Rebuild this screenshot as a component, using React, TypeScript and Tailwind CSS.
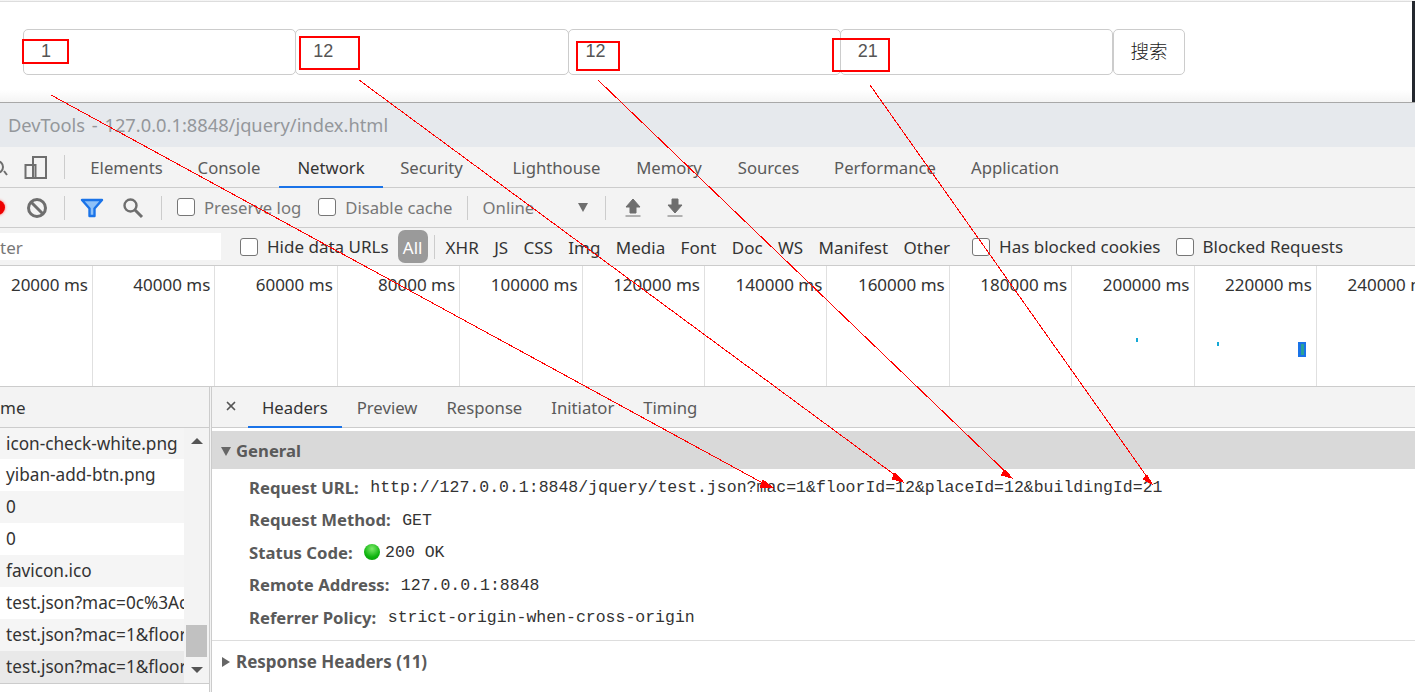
import React from 'react';
import { X } from 'lucide-react';

const ui = "font-['Noto_Sans','Open_Sans',sans-serif]";
const mono = "font-['Liberation_Mono',monospace]";

const panels = [
  { name: 'Elements', width: 'w-[105px]' },
  { name: 'Console', width: 'w-[100px]' },
  { name: 'Network', width: 'w-[104px]' },
  { name: 'Security', width: 'w-[97px]' },
  { name: 'Lighthouse', width: 'w-[153px]' },
  { name: 'Memory', width: 'w-[72px]' },
  { name: 'Sources', width: 'w-[127px]' },
  { name: 'Performance', width: 'w-[106px]' },
  { name: 'Application', width: 'w-[154px]' },
];
const types = ['XHR', 'JS', 'CSS', 'Img', 'Media', 'Font', 'Doc', 'WS', 'Manifest', 'Other'];
const ticks = [20000, 40000, 60000, 80000, 100000, 120000, 140000, 160000, 180000, 200000, 220000, 240000];
const files = [
  'icon-check-white.png',
  'yiban-add-btn.png',
  '0',
  '0',
  'favicon.ico',
  'test.json?mac=0c%3Ac2%3A11',
  'test.json?mac=1&floorId=12',
  'test.json?mac=1&floorId=12',
];

function Box({ label, className = '' }: { label: string; className?: string }) {
  return (
    <label className={`flex items-center gap-[9px] whitespace-nowrap ${className}`}>
      <span className="w-[18px] h-[18px] rounded-[3px] border border-[#767676] bg-white shrink-0" />
      {label}
    </label>
  );
}

function Field({ value }: { value: string }) {
  return (
    <div className="w-[273.25px] h-[46px] shrink-0 -mr-px border border-[#ccc] rounded-[5px] bg-white flex items-center pl-[17px] pb-[2px] text-[18px] text-[#555] font-['Liberation_Sans',sans-serif]">
      {value}
    </div>
  );
}

function Row({ name, value, dot }: { name: string; value: string; dot?: boolean }) {
  return (
    <div className="h-[32.5px] flex items-center whitespace-nowrap">
      <span className="font-bold text-[#5a5a5a] text-[16.7px] mr-[11.5px]">{name}</span>
      {dot && <span className="w-[16px] h-[16px] rounded-full mr-[5px] bg-[radial-gradient(circle_at_50%_30%,#7dea6a,#0fb40f_60%,#079507)]" />}
      <span className={`${mono} text-[16.5px] text-[#333] pt-[3px]`}>{value}</span>
    </div>
  );
}

export default function App() {
  return (
    <div className={`relative w-[1415px] h-[692px] overflow-hidden bg-white ${ui}`}>
      <div className="h-[102px] border-t border-t-transparent relative bg-[linear-gradient(to_bottom,#fff_88%,#f4f4f4)]">
        <div className="h-px bg-[#ddd]" />
        <div className="flex items-start pl-[23px] pt-[27px]">
          <Field value="1" />
          <Field value="12" />
          <Field value="12" />
          <Field value="21" />
          <div className="w-[72px] h-[46px] ml-px border border-[#ccc] rounded-[5px] flex items-center justify-center pb-[2px] text-[18.5px] text-[#222] font-['Noto_Sans_CJK_SC',sans-serif] font-light">
            搜索
          </div>
        </div>
        <div className="absolute right-0 top-0 bottom-0 w-[3px] bg-[#23272e]" />
      </div>

      <div className="h-[45px] border-t border-[#a8a8a8] bg-[#e6e9ed] flex items-center pl-[8px] text-[18.3px] [word-spacing:2px] text-[#94979b]">
        DevTools - 127.0.0.1:8848/jquery/index.html
      </div>

      <div className="h-[41px] bg-[#f3f3f3] border-b border-[#ccc] flex items-stretch text-[16.7px] text-[#5a5a5a]">
        <div className="w-[64px] shrink-0 flex items-center relative">
          <svg width="10" height="24" viewBox="0 0 10 24" className="shrink-0">
            <path d="M-3 6a6 6 0 1 1 0 12a6 6 0 1 1 0-12zM4 16l3 4" fill="none" stroke="#6e6e6e" strokeWidth="2" />
          </svg>
          <svg width="24" height="24" viewBox="0 0 24 24" className="ml-[14px] shrink-0">
            <path d="M9 2h13v21H9zM1.500 10h10v13h-10z" fill="#f3f3f3" stroke="#6e6e6e" strokeWidth="2" />
          </svg>
        </div>
        <div className="w-px h-[24px] self-center bg-[#ccc]" />
        <div className="flex pl-[9px] whitespace-nowrap">
          {panels.map((p) => (
            <div
              key={p.name}
              className={`${p.width} pt-[2px] flex items-center justify-center border-b-2 -mb-px ${
                p.name === 'Network' ? 'border-[#1a73e8] text-[#333]' : 'border-transparent'
              }`}
            >
              {p.name}
            </div>
          ))}
        </div>
      </div>

      <div className="h-[40px] bg-[#f3f3f3] border-b border-[#ccc] flex items-center text-[16.7px] text-[#777] whitespace-nowrap">
        <div className="w-[64px] flex items-center shrink-0 relative h-full">
          <span className="absolute -left-[10px] top-[12px] w-[15px] h-[15px] rounded-full bg-[#e00] shadow-[0_0_3px_#f66]" />
          <svg width="22" height="22" viewBox="0 0 22 22" className="absolute left-[26px] top-[9px]">
            <circle cx="11" cy="11" r="8.5" fill="none" stroke="#6e6e6e" strokeWidth="3" />
            <path d="M5 5l12 12" stroke="#6e6e6e" strokeWidth="3" />
          </svg>
        </div>
        <div className="w-px h-[24px] bg-[#ccc]" />
        <svg width="24" height="22" viewBox="0 0 24 22" className="ml-[15px]">
          <path d="M2 3h20l-7.500 8.500V19l-5 0v-7.500z" fill="#8ec1f8" stroke="#1a73e8" strokeWidth="2.4" strokeLinejoin="round" />
        </svg>
        <svg width="24" height="24" viewBox="0 0 24 24" className="ml-[17px]">
          <circle cx="9.500" cy="9.500" r="6" fill="none" stroke="#6e6e6e" strokeWidth="2.4" />
          <path d="M14 14l7 7" stroke="#6e6e6e" strokeWidth="3" />
        </svg>
        <div className="w-px h-[24px] bg-[#ccc] ml-[16px]" />
        <Box label="Preserve log" className="ml-[15px]" />
        <Box label="Disable cache" className="ml-[17px]" />
        <div className="w-px h-[24px] bg-[#ccc] ml-[14px]" />
        <span className="ml-[15px] w-[95px]">Online</span>
        <span className="w-0 h-0 border-x-[5px] border-x-transparent border-t-[9px] border-t-[#6e6e6e]" />
        <div className="w-px h-[24px] bg-[#ccc] ml-[17px]" />
        <svg width="18" height="20" viewBox="0 0 18 20" className="ml-[18px]">
          <path d="M9 1l7 8h-4v6H6V9H2zM1.500 18h15" fill="#6e6e6e" stroke="#6e6e6e" strokeWidth="1" />
        </svg>
        <svg width="18" height="20" viewBox="0 0 18 20" className="ml-[24px]">
          <path d="M6 1h6v6h4l-7 8-7-8h4zM1.500 18h15" fill="#6e6e6e" stroke="#6e6e6e" strokeWidth="1" />
        </svg>
      </div>

      <div className="h-[38px] bg-[#f3f3f3] border-b border-[#ccc] flex items-center text-[17px] text-[#333] whitespace-nowrap">
        <div className="w-[221px] h-[27px] bg-white text-[#777] flex items-center pt-[2px] overflow-hidden shrink-0">ter</div>
        <Box label="Hide data URLs" className="ml-[19px]" />
        <span className="ml-[9px] w-[30px] h-[33px] rounded-[7px] bg-[#9a9a9a] text-white flex items-center justify-center pt-[2px]">All</span>
        <div className="w-px h-[24px] bg-[#ccc] ml-[6px]" />
        <div className="flex gap-[15.4px] ml-[11px] pt-[2px]">
          {types.map((t) => (
            <span key={t}>{t}</span>
          ))}
        </div>
        <Box label="Has blocked cookies" className="ml-[22px]" />
        <Box label="Blocked Requests" className="ml-[15px]" />
      </div>

      <div className="h-[121px] bg-white border-b border-[#ccc] flex relative text-[17px] text-[#333] whitespace-nowrap">
        {ticks.map((t, i) => (
          <div
            key={t}
            className={`shrink-0 text-right pr-[4px] pt-[6px] border-r border-[#e0e0e0] ${i === 0 ? 'w-[93px]' : 'w-[122.4px]'}`}
          >
            {t} ms
          </div>
        ))}
        <span className="absolute left-[1136px] top-[72px] w-[2px] h-[4px] bg-[#14a9d6]" />
        <span className="absolute left-[1217px] top-[76px] w-[2px] h-[4px] bg-[#14a9d6]" />
        <span className="absolute left-[1298px] top-[76px] w-[8px] h-[15px] bg-[#1a73e8] flex justify-center">
          <span className="w-[3px] h-[11px] mt-[2px] bg-[#2aa198]" />
        </span>
      </div>

      <div className="h-[305px] flex bg-white">
        <div className="w-[210px] shrink-0 border-r border-[#ccc] h-full flex flex-col">
          <div className="h-[41px] bg-[#f3f3f3] border-b border-[#ccc] flex items-center pt-[2px] text-[17px] text-[#333]">me</div>
          <div className="flex h-[256px] border-b border-[#ccc] bg-[#f3f3f3]">
            <div className="w-[184px] shrink-0 overflow-hidden">
              {files.map((f, i) => (
                <div
                  key={i}
                  className={`pl-[6px] flex items-center text-[17.2px] text-[#333] whitespace-nowrap overflow-hidden ${
                    i === 0 ? 'h-[31px]' : 'h-[32px]'
                  } ${i === 7 ? 'bg-[#e9e9e9]' : i % 2 === 0 ? 'bg-[#f5f5f5]' : 'bg-white'}`}
                >
                  {f}
                </div>
              ))}
            </div>
            <div className="flex-1 flex flex-col items-center pt-[10px] relative">
              <span className="w-0 h-0 border-x-[6px] border-x-transparent border-b-[6px] border-b-[#555]" />
              <div className="absolute left-[2px] top-[197px] w-[21px] h-[32px] bg-[#c1c1c1]" />
              <span className="absolute bottom-[10px] w-0 h-0 border-x-[6px] border-x-transparent border-t-[6px] border-t-[#555]" />
            </div>
          </div>
        </div>
        <div className="w-px bg-[#f3f3f3]" />
        <div className="flex-1 flex flex-col border-l border-[#ccc] min-w-0">
          <div className="h-[41px] bg-[#f3f3f3] border-b border-[#ccc] flex items-stretch text-[16.7px] text-[#5a5a5a]">
            <div className="w-[35.5px] flex items-center justify-center pb-[3px] pl-[2px] text-[#555]">
              <X size={14} strokeWidth={3} />
            </div>
            {['Headers', 'Preview', 'Response', 'Initiator', 'Timing'].map((t) => (
              <div
                key={t}
                className={`px-[14.5px] pt-[2px] flex items-center border-b-2 -mb-px ${
                  t === 'Headers' ? 'border-[#1a73e8] text-[#333]' : 'border-transparent'
                }`}
              >
                {t}
              </div>
            ))}
          </div>
          <div className="h-[38px] mt-[3px] bg-[#d9d9d9] flex items-center pl-[9px] pt-[2px] gap-[5px] font-bold text-[#5a5a5a] text-[16.7px]">
            <span className="w-0 h-0 border-x-[5px] border-x-transparent border-t-[9px] border-t-[#666]" />
            General
          </div>
          <div className="pl-[37px] pt-[2px] pb-[6px] border-b border-[#ddd]">
            <Row name="Request URL:" value="http://127.0.0.1:8848/jquery/test.json?mac=1&floorId=12&placeId=12&buildingId=21" />
            <Row name="Request Method:" value="GET" />
            <Row name="Status Code:" value="200 OK" dot />
            <Row name="Remote Address:" value="127.0.0.1:8848" />
            <Row name="Referrer Policy:" value="strict-origin-when-cross-origin" />
          </div>
          <div className="h-[42px] flex items-center pl-[10px] gap-[6px] font-bold text-[#5a5a5a] text-[17px]">
            <span className="w-0 h-0 border-y-[5px] border-y-transparent border-l-[8px] border-l-[#666]" />
            Response Headers (11)
          </div>
        </div>
      </div>

      <span className="absolute left-[22px] top-[39px] w-[47px] h-[25px] border-2 border-[#f00]" />
      <span className="absolute left-[299px] top-[36px] w-[61px] h-[34px] border-2 border-[#f00]" />
      <span className="absolute left-[576px] top-[41px] w-[44px] h-[30px] border-2 border-[#f00]" />
      <span className="absolute left-[832px] top-[38px] w-[58px] h-[34px] border-2 border-[#f00]" />

      <svg className="absolute inset-0 pointer-events-none" width="1415" height="692" viewBox="0 0 1415 692">
        <g stroke="#f00" strokeWidth="1" fill="#f00" shapeRendering="crispEdges">
          <path d="M51 95L770 487" />
          <path d="M763 480l10 8l-13 -1z" />
          <path d="M359 80L903 481" />
          <path d="M895 473l8 9l-11 -3z" />
          <path d="M598 80L1012 478" />
          <path d="M1005 470l7 8l-11 -3z" />
          <path d="M870 85L1152 484" />
          <path d="M1147 475l5 9l-9 -5z" />
        </g>
      </svg>
    </div>
  );
}
